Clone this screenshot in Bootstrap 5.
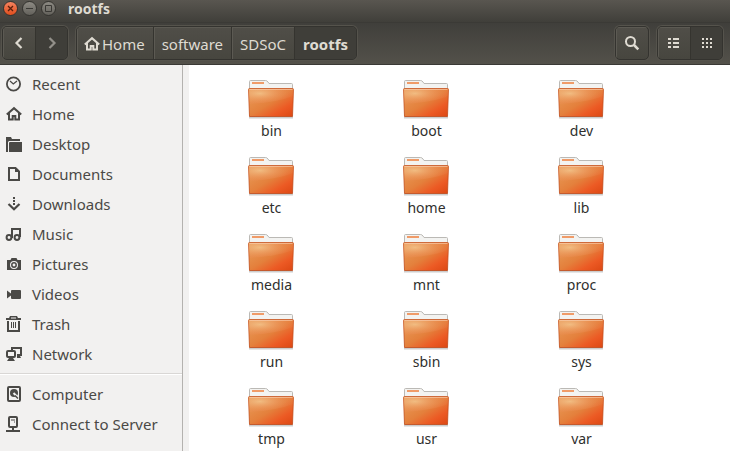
<!DOCTYPE html>
<html lang="en">
<head>
<meta charset="utf-8">
<meta name="viewport" content="width=device-width, initial-scale=1">
<title>rootfs</title>
<link href="https://cdn.jsdelivr.net/npm/bootstrap@5.3.0/dist/css/bootstrap.min.css" rel="stylesheet">
<style>
body{font-family:"Noto Sans","Open Sans",sans-serif;font-size:15px;line-height:20px;color:#3c3b37;background:#fff}
svg{display:block;flex:none}
.titlebar{height:23px;padding:0 3px 5px;background:linear-gradient(#595650,#403f3a);color:#dfdbd2;border-bottom:1px solid #3b3a36}
.win-title{font-size:14px;line-height:17px;padding-left:8px}
.wm-btn{width:15px;height:15px;border-radius:50%;border:1px solid #34332f;padding:0;background:linear-gradient(#8d8a83,#63615b);color:#3a3935;display:grid;place-items:center}
.wm-close{background:linear-gradient(#f58360,#e04e1d);color:#5a1e0b}
.toolbar{height:42px;padding:4px 7px 5px 2px;background:linear-gradient(#403f3b,#53514a);border-bottom:1px solid #3a3935}
.tool-group{height:34px;border:1px solid #34332f;border-radius:5px;background:linear-gradient(#504e48,#47463f);box-shadow:0 0 0 1px #55534c;overflow:hidden}
.tool-group>*{border:0;border-left:1px solid #35342f;color:#dfdbd2;background:transparent;padding:0;display:flex;align-items:center;justify-content:center;text-decoration:none;box-shadow:inset 1px 1px 0 #5c5a53}
.tool-group>*:first-child{border-left:0}
.tool-group>.tool-btn{width:32px}
.tool-group>.pressed{background:#3f3e39;box-shadow:none}
.tool-group>.dimmed{color:#93908a}
.crumbs a{padding:2px 8px 0}
.crumbs a:first-child{padding-left:7px;gap:2px}
.sidebar{width:183px;background:#f2f1f0;border-right:1px solid #b4b2af;padding-top:4px}
.place{height:30px;padding-left:5px;gap:9px;color:#4a4946;text-decoration:none}
.place-rule{height:2px;margin:4px 0;background:#d9d7d5;border-bottom:1px solid #fff}
.gutter{width:6px;background:#f2f1f0}
.files{display:grid;grid-template-columns:repeat(auto-fill,155px);grid-auto-rows:77px;align-content:start;padding:15px 0 0 5px;overflow:hidden}
.file{color:#2f2f2d;font-size:14px;text-decoration:none}
</style>
<script src="https://cdn.jsdelivr.net/npm/bootstrap@5.3.0/dist/js/bootstrap.bundle.min.js"></script>
</head>
<body class="vh-100 d-flex flex-column overflow-hidden">
<svg width="0" height="0" class="position-absolute" aria-hidden="true">
<defs>
<linearGradient id="fg" x1="0" y1="0" x2="1" y2="1"><stop offset="0" stop-color="#e8a05c"/><stop offset=".5" stop-color="#e4803c"/><stop offset=".75" stop-color="#ec5a24"/><stop offset="1" stop-color="#dc4713"/></linearGradient>
<radialGradient id="fs" cx=".25" cy=".3" r=".8"><stop offset="0" stop-color="#f8d8a4" stop-opacity=".6"/><stop offset="1" stop-color="#f08050" stop-opacity=".1"/></radialGradient>
<linearGradient id="fb" x1="0" y1="0" x2="0" y2="1"><stop offset="0" stop-color="#c9531f"/><stop offset="1" stop-color="#b8400f"/></linearGradient>
<symbol id="folder" viewBox="1 1 48 41">
<path d="M2.500 10V2.500Q2.500 1.500 3.500 1.500H18.500Q20 1.500 21 3L22 4.500H44.500Q45.500 4.500 45.500 5.500V10Z" fill="#f3f3f1" stroke="#bbb9b5"/>
<path d="M5 4H17" stroke="#f09b68" stroke-width="2"/>
<path d="M2 38.500H46" stroke="#000" stroke-opacity=".2" stroke-width="2"/>
<path d="M1.500 10.500Q1.500 9.500 2.500 9.500H45.500Q46.500 9.500 46.500 10.500L45.500 37.500H2.500Z" fill="url(#fg)" stroke="url(#fb)" stroke-opacity=".75"/>
<path d="M2 10H46L45.800 17Q32 23 2.500 25Z" fill="url(#fs)"/>
<path d="M2.500 10.500H45.500" stroke="#fbd2b4" stroke-opacity=".6"/>
</symbol>
<symbol id="home" viewBox="0 0 16 16"><path d="M.8 8.500L8 2.200L15.200 8.500" fill="none" stroke="currentColor" stroke-width="2"/><path d="M3 7V13.500H6.700V10H9.300V13.500H13V7" fill="none" stroke="currentColor" stroke-width="2"/></symbol>
</defs>
</svg>

<header>
<div class="titlebar d-flex align-items-center gap-1">
<button class="wm-btn wm-close" aria-label="Close"><svg width="7" height="7" viewBox="0 0 7 7"><path d="M1 1L6 6M6 1L1 6" stroke="currentColor" stroke-width="1.300"/></svg></button>
<button class="wm-btn" aria-label="Minimize"><svg width="7" height="7" viewBox="0 0 7 7"><path d="M0 3.500H7" stroke="currentColor"/></svg></button>
<button class="wm-btn" aria-label="Maximize"><svg width="7" height="7" viewBox="0 0 7 7"><path d="M.5 .5H6.500V6.500H.5Z" fill="none" stroke="currentColor"/></svg></button>
<span class="win-title fw-bold">rootfs</span>
</div>
<nav class="toolbar d-flex align-items-center gap-2" aria-label="Toolbar">
<div class="tool-group d-flex">
<button class="tool-btn" aria-label="Back"><svg width="16" height="16" viewBox="0 0 16 16"><path d="M10.500 3L5.500 8L10.500 13" fill="none" stroke="currentColor" stroke-width="2.200"/></svg></button>
<button class="tool-btn pressed dimmed" aria-label="Forward"><svg width="16" height="16" viewBox="0 0 16 16"><path d="M5.500 3L10.500 8L5.500 13" fill="none" stroke="currentColor" stroke-width="2.200"/></svg></button>
</div>
<div class="tool-group crumbs d-flex">
<a href="#"><svg width="16" height="16"><use href="#home"/></svg>Home</a>
<a href="#">software</a>
<a href="#">SDSoC</a>
<a href="#" class="pressed fw-bold" aria-current="page">rootfs</a>
</div>
<div class="tool-group d-flex ms-auto">
<button class="tool-btn" aria-label="Search"><svg width="16" height="16" viewBox="0 0 16 16"><circle cx="6.500" cy="6.500" r="4.500" fill="none" stroke="currentColor" stroke-width="2"/><path d="M10 10L14.300 14.300" stroke="currentColor" stroke-width="2.500"/></svg></button>
</div>
<div class="tool-group d-flex">
<button class="tool-btn" aria-label="List view"><svg width="16" height="16" viewBox="0 0 16 16"><path d="M2 4H5M7 4H13M2 8H5M7 8H13M2 12H5M7 12H13" stroke="currentColor" stroke-width="2"/></svg></button>
<button class="tool-btn pressed" aria-label="Icon view"><svg width="16" height="16" viewBox="0 0 16 16"><path d="M3 4H13M3 8H13M3 12H13" stroke="currentColor" stroke-width="2" stroke-dasharray="2 2"/></svg></button>
</div>
</nav>
</header>

<div class="d-flex flex-grow-1 overflow-hidden">
<aside class="sidebar flex-shrink-0 overflow-hidden">
<a class="place d-flex align-items-center" href="#"><svg width="18" height="16" viewBox="0 0 18 16"><circle cx="8.500" cy="8" r="6.600" fill="none" stroke="currentColor" stroke-width="1.800"/><path d="M5 5L8.300 8L12 5" fill="none" stroke="currentColor" stroke-width="1.300"/></svg>Recent</a>
<a class="place d-flex align-items-center" href="#"><svg width="18" height="16" viewBox="-1 0 18 16"><use href="#home" width="16" height="16"/></svg>Home</a>
<a class="place d-flex align-items-center" href="#"><svg width="18" height="16" viewBox="0 0 18 16"><path d="M1 1H6L7 3H15V5H4L3 6V16H1Z M4.500 6H17V16H4V7Z" fill="currentColor"/></svg>Desktop</a>
<a class="place d-flex align-items-center" href="#"><svg width="18" height="16" viewBox="0 0 18 16"><path d="M4 2H10.500L14 5.500V14H4Z" fill="none" stroke="currentColor" stroke-width="2"/><path d="M10 2V6H14Z" fill="currentColor"/></svg>Documents</a>
<a class="place d-flex align-items-center" href="#"><svg width="18" height="16" viewBox="0 0 18 16"><path d="M9 1V9" stroke="currentColor" stroke-width="2" stroke-dasharray="2 1"/><path d="M3.500 8L9 13.300L14.500 8" fill="none" stroke="currentColor" stroke-width="2.200"/></svg>Downloads</a>
<a class="place d-flex align-items-center" href="#"><svg width="18" height="16" viewBox="0 0 18 16"><path d="M7 12V3H15V11" fill="none" stroke="currentColor" stroke-width="2"/><circle cx="4" cy="11.500" r="2.400" fill="none" stroke="currentColor" stroke-width="2"/><circle cx="12" cy="11.500" r="2.400" fill="none" stroke="currentColor" stroke-width="2"/></svg>Music</a>
<a class="place d-flex align-items-center" href="#"><svg width="18" height="16" viewBox="0 0 18 16"><path d="M2 4H5.500L6.500 2H11.500L12.500 4H16V14H2Z M9 5A4 4 0 1 0 9 13A4 4 0 1 0 9 5Z" fill="currentColor" fill-rule="evenodd"/><circle cx="9" cy="9" r="2.200" fill="none" stroke="currentColor" stroke-width="1.500"/></svg>Pictures</a>
<a class="place d-flex align-items-center" href="#"><svg width="18" height="16" viewBox="0 0 18 16"><path d="M7 4H15Q16 4 16 5V12Q16 13 15 13H7Q6 13 6 12V9.500L2 12.500V4.500L6 7.500V5Q6 4 7 4Z" fill="currentColor"/></svg>Videos</a>
<a class="place d-flex align-items-center" href="#"><svg width="18" height="16" viewBox="0 0 18 16"><path d="M1 4V2H4L5 0H12L13 2H16V4Z" fill="currentColor"/><path d="M6 2H11" stroke="#f2f1f0"/><path d="M3 5V15H14V5" fill="none" stroke="currentColor" stroke-width="2"/><path d="M6.500 6V12M8.500 6V12M10.500 6V12" stroke="currentColor"/></svg>Trash</a>
<a class="place d-flex align-items-center" href="#"><svg width="18" height="16" viewBox="0 0 18 16"><path d="M7 4V2H16V9H12" fill="none" stroke="currentColor" stroke-width="2"/><path d="M12 10H15L16 12H12Z" fill="currentColor"/><rect x="2" y="5" width="8" height="6" rx="1" fill="none" stroke="currentColor" stroke-width="2"/><path d="M4 12H8L10 15H2Z" fill="currentColor"/></svg>Network</a>
<div class="place-rule" role="separator"></div>
<a class="place d-flex align-items-center" href="#"><svg width="18" height="16" viewBox="0 0 18 16"><rect x="3" y="1" width="12" height="14" rx="1" fill="none" stroke="currentColor" stroke-width="2"/><circle cx="9" cy="7" r="4" fill="currentColor"/><path d="M8.500 7L12.500 11" stroke="#f2f1f0" stroke-width="2"/><path d="M10 9.500L13 12.500" stroke="currentColor" stroke-width="1.500"/></svg>Computer</a>
<a class="place d-flex align-items-center" href="#"><svg width="18" height="16" viewBox="0 0 18 16"><rect x="4" y="1" width="8" height="10" rx="1" fill="none" stroke="currentColor" stroke-width="2"/><path d="M6 4H10M9 6H10" stroke="currentColor"/><path d="M8 11V15M1 15H15" stroke="currentColor" stroke-width="2"/></svg>Connect to Server</a>
</aside>
<div class="gutter flex-shrink-0"></div>
<main class="files flex-grow-1">
<a class="file d-flex flex-column align-items-center" href="#"><svg width="48" height="41"><use href="#folder"/></svg>bin</a>
<a class="file d-flex flex-column align-items-center" href="#"><svg width="48" height="41"><use href="#folder"/></svg>boot</a>
<a class="file d-flex flex-column align-items-center" href="#"><svg width="48" height="41"><use href="#folder"/></svg>dev</a>
<a class="file d-flex flex-column align-items-center" href="#"><svg width="48" height="41"><use href="#folder"/></svg>etc</a>
<a class="file d-flex flex-column align-items-center" href="#"><svg width="48" height="41"><use href="#folder"/></svg>home</a>
<a class="file d-flex flex-column align-items-center" href="#"><svg width="48" height="41"><use href="#folder"/></svg>lib</a>
<a class="file d-flex flex-column align-items-center" href="#"><svg width="48" height="41"><use href="#folder"/></svg>media</a>
<a class="file d-flex flex-column align-items-center" href="#"><svg width="48" height="41"><use href="#folder"/></svg>mnt</a>
<a class="file d-flex flex-column align-items-center" href="#"><svg width="48" height="41"><use href="#folder"/></svg>proc</a>
<a class="file d-flex flex-column align-items-center" href="#"><svg width="48" height="41"><use href="#folder"/></svg>run</a>
<a class="file d-flex flex-column align-items-center" href="#"><svg width="48" height="41"><use href="#folder"/></svg>sbin</a>
<a class="file d-flex flex-column align-items-center" href="#"><svg width="48" height="41"><use href="#folder"/></svg>sys</a>
<a class="file d-flex flex-column align-items-center" href="#"><svg width="48" height="41"><use href="#folder"/></svg>tmp</a>
<a class="file d-flex flex-column align-items-center" href="#"><svg width="48" height="41"><use href="#folder"/></svg>usr</a>
<a class="file d-flex flex-column align-items-center" href="#"><svg width="48" height="41"><use href="#folder"/></svg>var</a>
</main>
</div>
</body>
</html>
